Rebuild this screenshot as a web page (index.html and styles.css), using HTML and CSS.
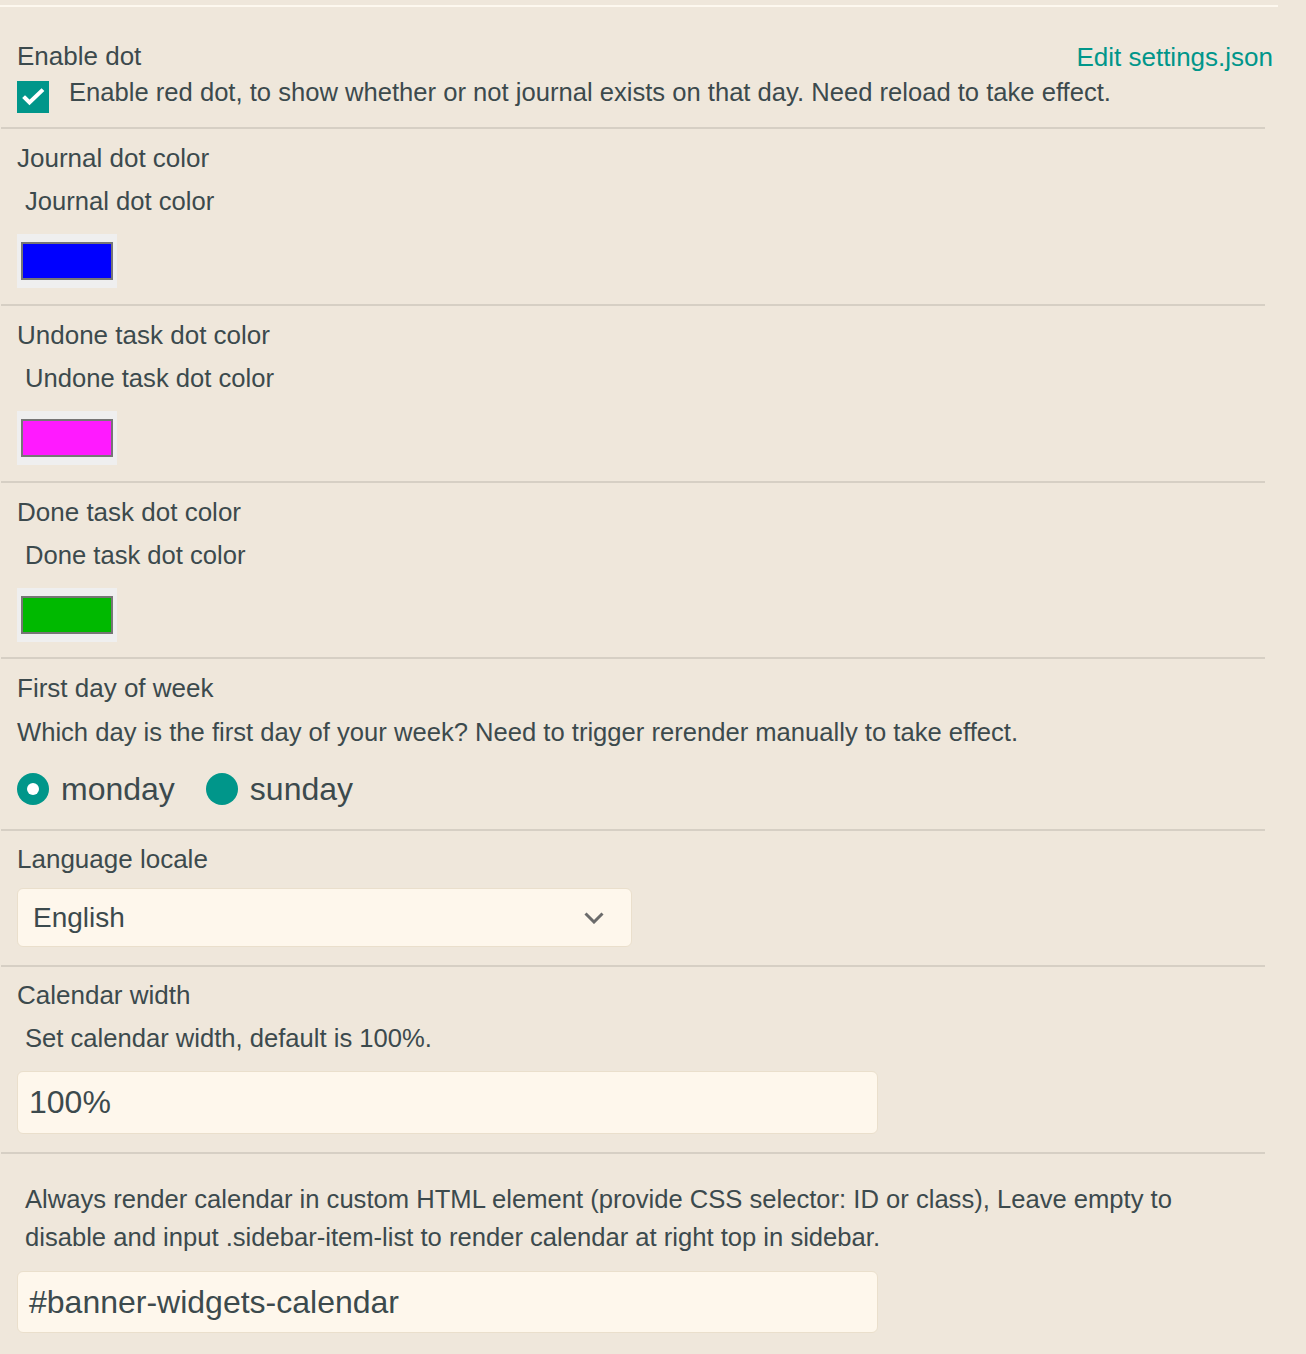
FILE: index.html
```html
<!DOCTYPE html>
<html lang="en">
<head>
<meta charset="utf-8">
<title>Settings</title>
<link rel="stylesheet" href="styles.css">
</head>
<body>
<div class="page">
  <div class="topline"></div>
  <a class="edit-link" href="#">Edit settings.json</a>
  <div class="settings">
    <section class="item item-first">
      <div class="title">Enable dot</div>
      <label class="check-row">
        <span class="checkbox">
          <svg width="32" height="32" viewBox="0 0 32 32"><path d="M8 17 L12.5 21.5 L24.5 10" fill="none" stroke="#fff" stroke-width="4" stroke-linecap="square"/></svg>
        </span>
        <span class="check-text">Enable red dot, to show whether or not journal exists on that day. Need reload to take effect.</span>
      </label>
    </section>

    <section class="item">
      <div class="title">Journal dot color</div>
      <div class="desc">Journal dot color</div>
      <div class="swatch"><div class="swatch-fill fill-blue"></div></div>
    </section>

    <section class="item">
      <div class="title">Undone task dot color</div>
      <div class="desc">Undone task dot color</div>
      <div class="swatch"><div class="swatch-fill fill-magenta"></div></div>
    </section>

    <section class="item item-done">
      <div class="title">Done task dot color</div>
      <div class="desc">Done task dot color</div>
      <div class="swatch"><div class="swatch-fill fill-green"></div></div>
    </section>

    <section class="item item-radio">
      <div class="title">First day of week</div>
      <div class="desc desc-flush">Which day is the first day of your week? Need to trigger rerender manually to take effect.</div>
      <div class="radio-row">
        <label class="radio"><span class="radio-dot checked"></span><span class="radio-label">monday</span></label>
        <label class="radio"><span class="radio-dot"></span><span class="radio-label">sunday</span></label>
      </div>
    </section>

    <section class="item item-select">
      <div class="title">Language locale</div>
      <div class="select">
        <span class="select-value">English</span>
        <svg class="chevron" width="20" height="12" viewBox="0 0 20 12"><path d="M1.5 1.5 L10 10 L18.5 1.5" fill="none" stroke="#6b6b6b" stroke-width="3"/></svg>
      </div>
    </section>

    <section class="item item-width">
      <div class="title">Calendar width</div>
      <div class="desc">Set calendar width, default is 100%.</div>
      <div class="text-input">100%</div>
    </section>

    <section class="item item-last">
      <div class="desc">Always render calendar in custom HTML element (provide CSS selector: ID or class), Leave empty to disable and input .sidebar-item-list to render calendar at right top in sidebar.</div>
      <div class="text-input input-last">#banner-widgets-calendar</div>
    </section>
  </div>
</div>
</body>
</html>
```

FILE: styles.css
```css
html, body {
  margin: 0;
  padding: 0;
  background: #efe7db;
}

body {
  font-family: "Liberation Sans", Arial, sans-serif;
  color: #3c4a4d;
  font-size: 25.6px;
  line-height: 38px;
}

.page {
  position: relative;
  width: 1306px;
  min-height: 1349px;
}

.topline {
  margin-top: 5px;
  width: 1278px;
  height: 2px;
  background: #fdf8ef;
}

.edit-link {
  position: absolute;
  top: 33px;
  right: 33px;
  color: #00968a;
  text-decoration: none;
  font-size: 26px;
  line-height: 38px;
}

.settings {
  margin-left: 1px;
  width: 1264px;
}

.item {
  padding: 11px 0 16px 16px;
  border-bottom: 2px solid #d6cfc4;
}

.title {
  font-size: 26px;
  line-height: 36px;
}

.desc {
  margin-top: 6px;
  padding-left: 8px;
  padding-right: 80px;
}

.desc-flush {
  padding-left: 0;
  margin-top: 7px;
}

/* enable dot */
.item-first {
  padding-top: 31px;
  padding-bottom: 14px;
}

.check-row {
  display: flex;
  align-items: flex-start;
  gap: 20px;
}

.checkbox {
  flex: none;
  width: 32px;
  height: 32px;
  margin-top: 7px;
  background: #00968a;
  display: flex;
}

.check-text {
  line-height: 36px;
}

/* color swatches */
.swatch {
  margin-top: 14px;
  width: 92px;
  padding: 8px 4px;
  background: #efefef;
}

.swatch-fill {
  height: 34px;
  border: 2px solid #767676;
}

.fill-blue { background: #0000ff; }
.fill-magenta { background: #ff1aff; }
.fill-green { background: #00b900; }

.item-done {
  padding-bottom: 15px;
}

/* radios */
.item-radio {
  padding-bottom: 20px;
}

.radio-row {
  margin-top: 18px;
  display: flex;
  gap: 31px;
  height: 40px;
  align-items: center;
}

.radio {
  display: flex;
  align-items: center;
  gap: 12px;
}

.radio-dot {
  width: 32px;
  height: 32px;
  border-radius: 50%;
  background: #00968a;
  display: flex;
  align-items: center;
  justify-content: center;
}

.radio-dot.checked::after {
  content: "";
  width: 12px;
  height: 12px;
  border-radius: 50%;
  background: #fff;
}

.radio-label {
  font-size: 32px;
  line-height: 40px;
}

/* select */
.item-select {
  padding-top: 10px;
  padding-bottom: 18px;
}

.select {
  margin-top: 11px;
  box-sizing: border-box;
  width: 615px;
  height: 59px;
  background: #fef7ec;
  border: 1px solid #eadfcc;
  border-radius: 6px;
  display: flex;
  align-items: center;
  justify-content: space-between;
  padding: 0 27px 0 15px;
}

.select-value {
  font-size: 28px;
  line-height: 34px;
}

.chevron {
  flex: none;
  margin-top: 1px;
}

/* text inputs */
.text-input {
  margin-top: 14px;
  box-sizing: border-box;
  width: 861px;
  height: 63px;
  background: #fef7ec;
  border: 1px solid #eadfcc;
  border-radius: 6px;
  padding: 0 11px;
  font-size: 32px;
  line-height: 61px;
}

.item-width {
  padding-top: 10px;
  padding-bottom: 18px;
}

.item-last {
  padding-top: 20px;
  border-bottom: none;
}

.input-last {
  margin-top: 15px;
  height: 62px;
  line-height: 60px;
}
```
